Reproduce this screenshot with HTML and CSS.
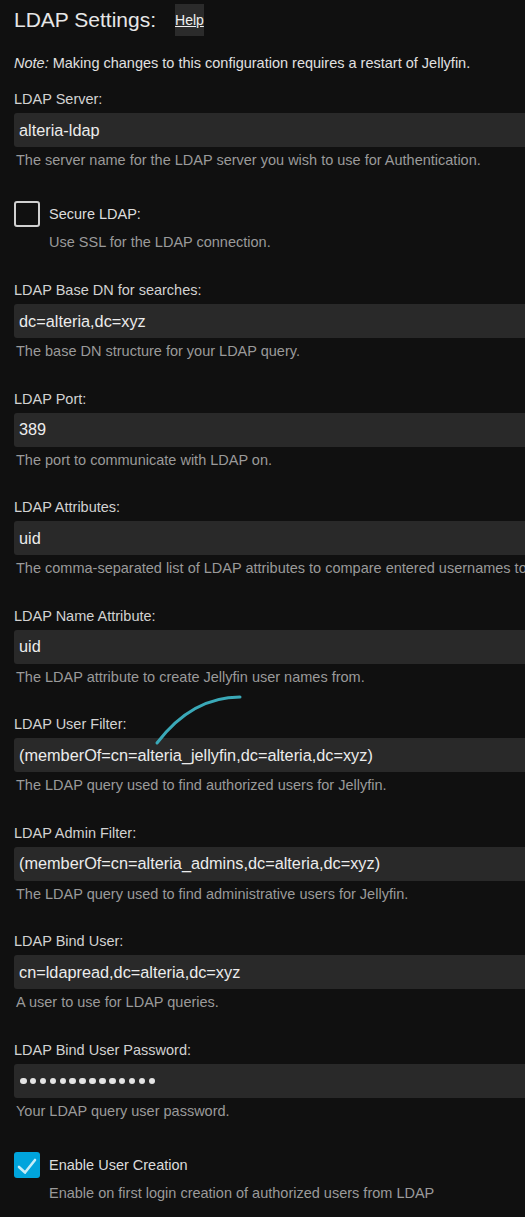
FILE: index.html
```html
<!DOCTYPE html>
<html lang="en">
<head>
<meta charset="utf-8">
<title>LDAP Settings</title>
<link rel="stylesheet" href="styles.css">
</head>
<body>
<div class="page">
  <div class="header">
    <h2 class="title">LDAP Settings:</h2>
    <a class="help" href="#">Help</a>
  </div>
  <p class="note"><em>Note:</em> Making changes to this configuration requires a restart of Jellyfin.</p>

  <div class="field">
    <label class="label">LDAP Server:</label>
    <div class="input">alteria-ldap</div>
    <div class="desc">The server name for the LDAP server you wish to use for Authentication.</div>
  </div>

  <div class="check-field">
    <div class="check-row">
      <span class="box"></span>
      <span class="check-label">Secure LDAP:</span>
    </div>
    <div class="check-desc">Use SSL for the LDAP connection.</div>
  </div>

  <div class="field">
    <label class="label">LDAP Base DN for searches:</label>
    <div class="input">dc=alteria,dc=xyz</div>
    <div class="desc">The base DN structure for your LDAP query.</div>
  </div>

  <div class="field">
    <label class="label">LDAP Port:</label>
    <div class="input">389</div>
    <div class="desc">The port to communicate with LDAP on.</div>
  </div>

  <div class="field">
    <label class="label">LDAP Attributes:</label>
    <div class="input">uid</div>
    <div class="desc">The comma-separated list of LDAP attributes to compare entered usernames to.</div>
  </div>

  <div class="field">
    <label class="label">LDAP Name Attribute:</label>
    <div class="input">uid</div>
    <div class="desc">The LDAP attribute to create Jellyfin user names from.</div>
  </div>

  <div class="field">
    <label class="label">LDAP User Filter:</label>
    <div class="input">(memberOf=cn=alteria_jellyfin,dc=alteria,dc=xyz)</div>
    <div class="desc">The LDAP query used to find authorized users for Jellyfin.</div>
  </div>

  <div class="field">
    <label class="label">LDAP Admin Filter:</label>
    <div class="input">(memberOf=cn=alteria_admins,dc=alteria,dc=xyz)</div>
    <div class="desc">The LDAP query used to find administrative users for Jellyfin.</div>
  </div>

  <div class="field">
    <label class="label">LDAP Bind User:</label>
    <div class="input">cn=ldapread,dc=alteria,dc=xyz</div>
    <div class="desc">A user to use for LDAP queries.</div>
  </div>

  <div class="field">
    <label class="label">LDAP Bind User Password:</label>
    <div class="input dots">
      <i></i><i></i><i></i><i></i><i></i><i></i><i></i><i></i><i></i><i></i><i></i><i></i><i></i><i></i>
    </div>
    <div class="desc">Your LDAP query user password.</div>
  </div>

  <div class="check-field">
    <div class="check-row">
      <span class="box checked">
        <svg width="26" height="26" viewBox="0 0 26 26"><path d="M5 15 L11 20.5 L21 8" fill="none" stroke="#c4ecf8" stroke-width="2.6" stroke-linecap="round" stroke-linejoin="round"/></svg>
      </span>
      <span class="check-label">Enable User Creation</span>
    </div>
    <div class="check-desc">Enable on first login creation of authorized users from LDAP</div>
  </div>

  <svg class="annot" width="100" height="60" viewBox="0 0 100 60"><path d="M7 53 Q 42 7 90 7" fill="none" stroke="#3aa9b8" stroke-width="3" stroke-linecap="round"/></svg>
</div>
</body>
</html>
```

FILE: styles.css
```css
html, body {
  margin: 0;
  padding: 0;
  background: #101010;
  overflow: hidden;
}

body {
  font-family: "Liberation Sans", Arial, sans-serif;
  font-size: 14.5px;
  color: #d8d8d8;
}

.page {
  position: relative;
  width: 640px;
  padding: 4px 0 0 14px;
}

.header {
  display: flex;
  align-items: center;
  gap: 19px;
  height: 32px;
}

.title {
  margin: 0;
  font-size: 21px;
  font-weight: 400;
  line-height: 32px;
  color: #e6e6e6;
}

.help {
  display: flex;
  align-items: center;
  height: 32px;
  background: #2b2b2b;
  font-size: 14px;
  color: #f0f0f0;
  text-decoration: underline;
}

.note {
  margin: 17px 0 16px;
  line-height: 20px;
  color: #e0e0e0;
}

.field {
  margin-bottom: 27.5px;
}

.label {
  display: block;
  line-height: 20px;
  color: #d2d2d2;
}

.input {
  display: flex;
  align-items: center;
  margin-top: 4px;
  height: 34px;
  padding-left: 5px;
  background: #292929;
  border-radius: 3px;
  font-size: 16.3px;
  color: #ececec;
  white-space: nowrap;
}

.desc {
  margin-top: 3px;
  padding-left: 2px;
  line-height: 20px;
  color: #9a9a9a;
  white-space: nowrap;
}

.dots {
  gap: 3.4px;
  padding-left: 6px;
}

.dots i {
  display: block;
  width: 6.5px;
  height: 6.5px;
  border-radius: 50%;
  background: #e4e4e4;
  margin-top: 1px;
}

.check-field {
  padding-top: 3.5px;
  margin-bottom: 28px;
}

.check-row {
  display: flex;
  align-items: center;
  gap: 9px;
  height: 26px;
}

.box {
  display: block;
  box-sizing: border-box;
  width: 26px;
  height: 26px;
  border: 2px solid #d0d0d0;
  border-radius: 3px;
}

.box.checked {
  border: none;
  background: #00a4dc;
}

.box.checked svg {
  display: block;
}

.check-label {
  line-height: 20px;
  color: #dcdcdc;
}

.check-desc {
  margin-top: 5px;
  padding-left: 35px;
  line-height: 20px;
  color: #9a9a9a;
  white-space: nowrap;
}

.annot {
  position: absolute;
  left: 150px;
  top: 690px;
}
```
